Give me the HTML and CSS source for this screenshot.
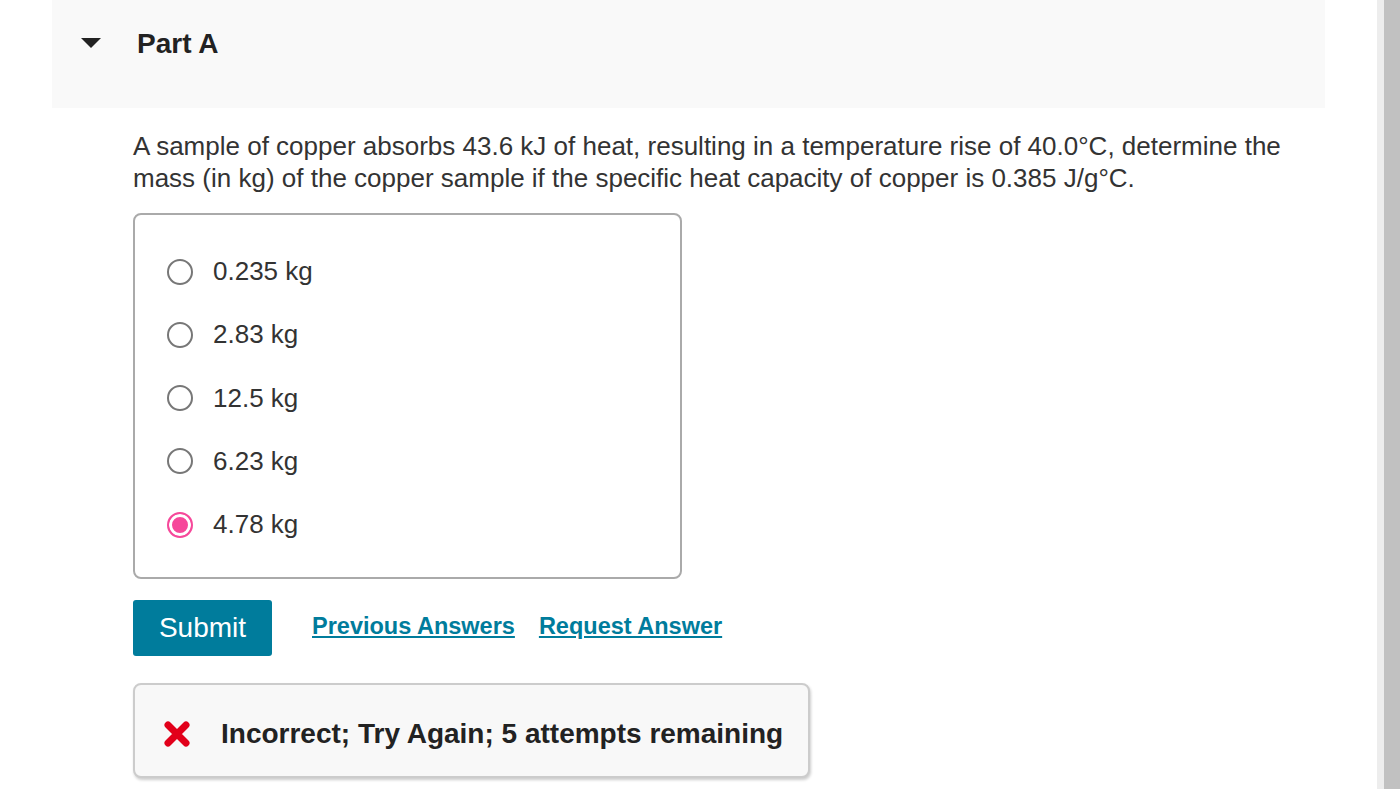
FILE: index.html
```html
<!DOCTYPE html>
<html lang="en">
<head>
    <meta charset="UTF-8">
    <meta name="viewport" content="width=device-width, initial-scale=1.0">
    <title>Part A</title>
    <link rel="stylesheet" href="styles.css">
</head>
<body>
    <div class="page">
        <div class="content">
            <div class="part-header">
                <span class="toggle"></span>
                <h2>Part A</h2>
            </div>

            <div class="question">
                <p class="prompt">A sample of copper absorbs 43.6 kJ of heat, resulting in a temperature rise of 40.0°C, determine the mass (in kg) of the copper sample if the specific heat capacity of copper is 0.385 J/g°C.</p>

                <div class="choices">
                    <label class="choice"><input type="radio" name="ans"><span class="radio"></span>0.235 kg</label>
                    <label class="choice"><input type="radio" name="ans"><span class="radio"></span>2.83 kg</label>
                    <label class="choice"><input type="radio" name="ans"><span class="radio"></span>12.5 kg</label>
                    <label class="choice"><input type="radio" name="ans"><span class="radio"></span>6.23 kg</label>
                    <label class="choice"><input type="radio" name="ans" checked><span class="radio"></span>4.78 kg</label>
                </div>

                <div class="actions">
                    <button class="submit">Submit</button>
                    <a href="#" class="link">Previous Answers</a>
                    <a href="#" class="link">Request Answer</a>
                </div>

                <div class="feedback">
                    <svg class="wrong" width="26" height="26" viewBox="0 0 26 26">
                        <path d="M4 4 L22 22 M22 4 L4 22" stroke="#e2001a" stroke-width="7" stroke-linecap="round"/>
                    </svg>
                    <span>Incorrect; Try Again; 5 attempts remaining</span>
                </div>
            </div>
        </div>
        <div class="scrollbar"></div>
    </div>
</body>
</html>
```

FILE: styles.css
```css
body {
    margin: 0;
    background: white;
    font-family: 'Liberation Sans', Arial, sans-serif;
    color: #333;
}

.page {
    display: flex;
    height: 789px;
    overflow: hidden;
}

.content {
    flex: 1;
    padding-left: 52px;
    padding-right: 52px;
}

.part-header {
    display: flex;
    align-items: flex-start;
    height: 108px;
    background: #f9f9f9;
}

.toggle {
    width: 0;
    height: 0;
    margin-top: 38px;
    margin-left: 29px;
    border-left: 10px solid transparent;
    border-right: 10px solid transparent;
    border-top: 10px solid #222;
}

.part-header h2 {
    margin: 28px 0 0 36px;
    font-size: 28px;
    font-weight: bold;
    color: #222;
}

.question {
    padding-left: 81px;
}

.prompt {
    margin: 22px 0 0;
    font-size: 26px;
    line-height: 32px;
    max-width: 1200px;
}

.choices {
    width: 545px;
    margin-top: 19px;
    padding: 25px 0 21px;
    border: 2px solid #aaa;
    border-radius: 8px;
}

.choice {
    display: flex;
    align-items: center;
    height: 63.25px;
    padding-left: 32px;
    font-size: 26px;
    cursor: pointer;
}

.choice input {
    display: none;
}

.radio {
    box-sizing: border-box;
    width: 26px;
    height: 26px;
    margin-right: 20px;
    border: 2px solid #777;
    border-radius: 50%;
}

.choice input:checked + .radio {
    border: 2px solid #f6489a;
    background: #f6489a;
    box-shadow: inset 0 0 0 3px white;
}

.actions {
    display: flex;
    align-items: center;
    margin-top: 21px;
}

.submit {
    width: 139px;
    height: 56px;
    margin-right: 40px;
    border: none;
    border-radius: 3px;
    background: #007c9c;
    color: white;
    font-family: inherit;
    font-size: 28px;
    cursor: pointer;
}

.link {
    margin-right: 24px;
    margin-bottom: 3px;
    color: #007c9c;
    font-size: 23.5px;
    font-weight: bold;
    text-decoration: underline;
}

.feedback {
    display: inline-flex;
    align-items: center;
    box-sizing: border-box;
    width: 677px;
    height: 95px;
    margin-top: 27px;
    padding: 6px 0 0 29px;
    border: 2px solid #ccc;
    border-radius: 8px;
    background: #f8f8f8;
    box-shadow: 1px 2px 3px rgba(0, 0, 0, 0.2);
    font-size: 28px;
    font-weight: bold;
    color: #222;
}

.wrong {
    margin-right: 31px;
}

.scrollbar {
    width: 16px;
    border-left: 7px solid #ededed;
    background: #c1c1c1;
}
```
